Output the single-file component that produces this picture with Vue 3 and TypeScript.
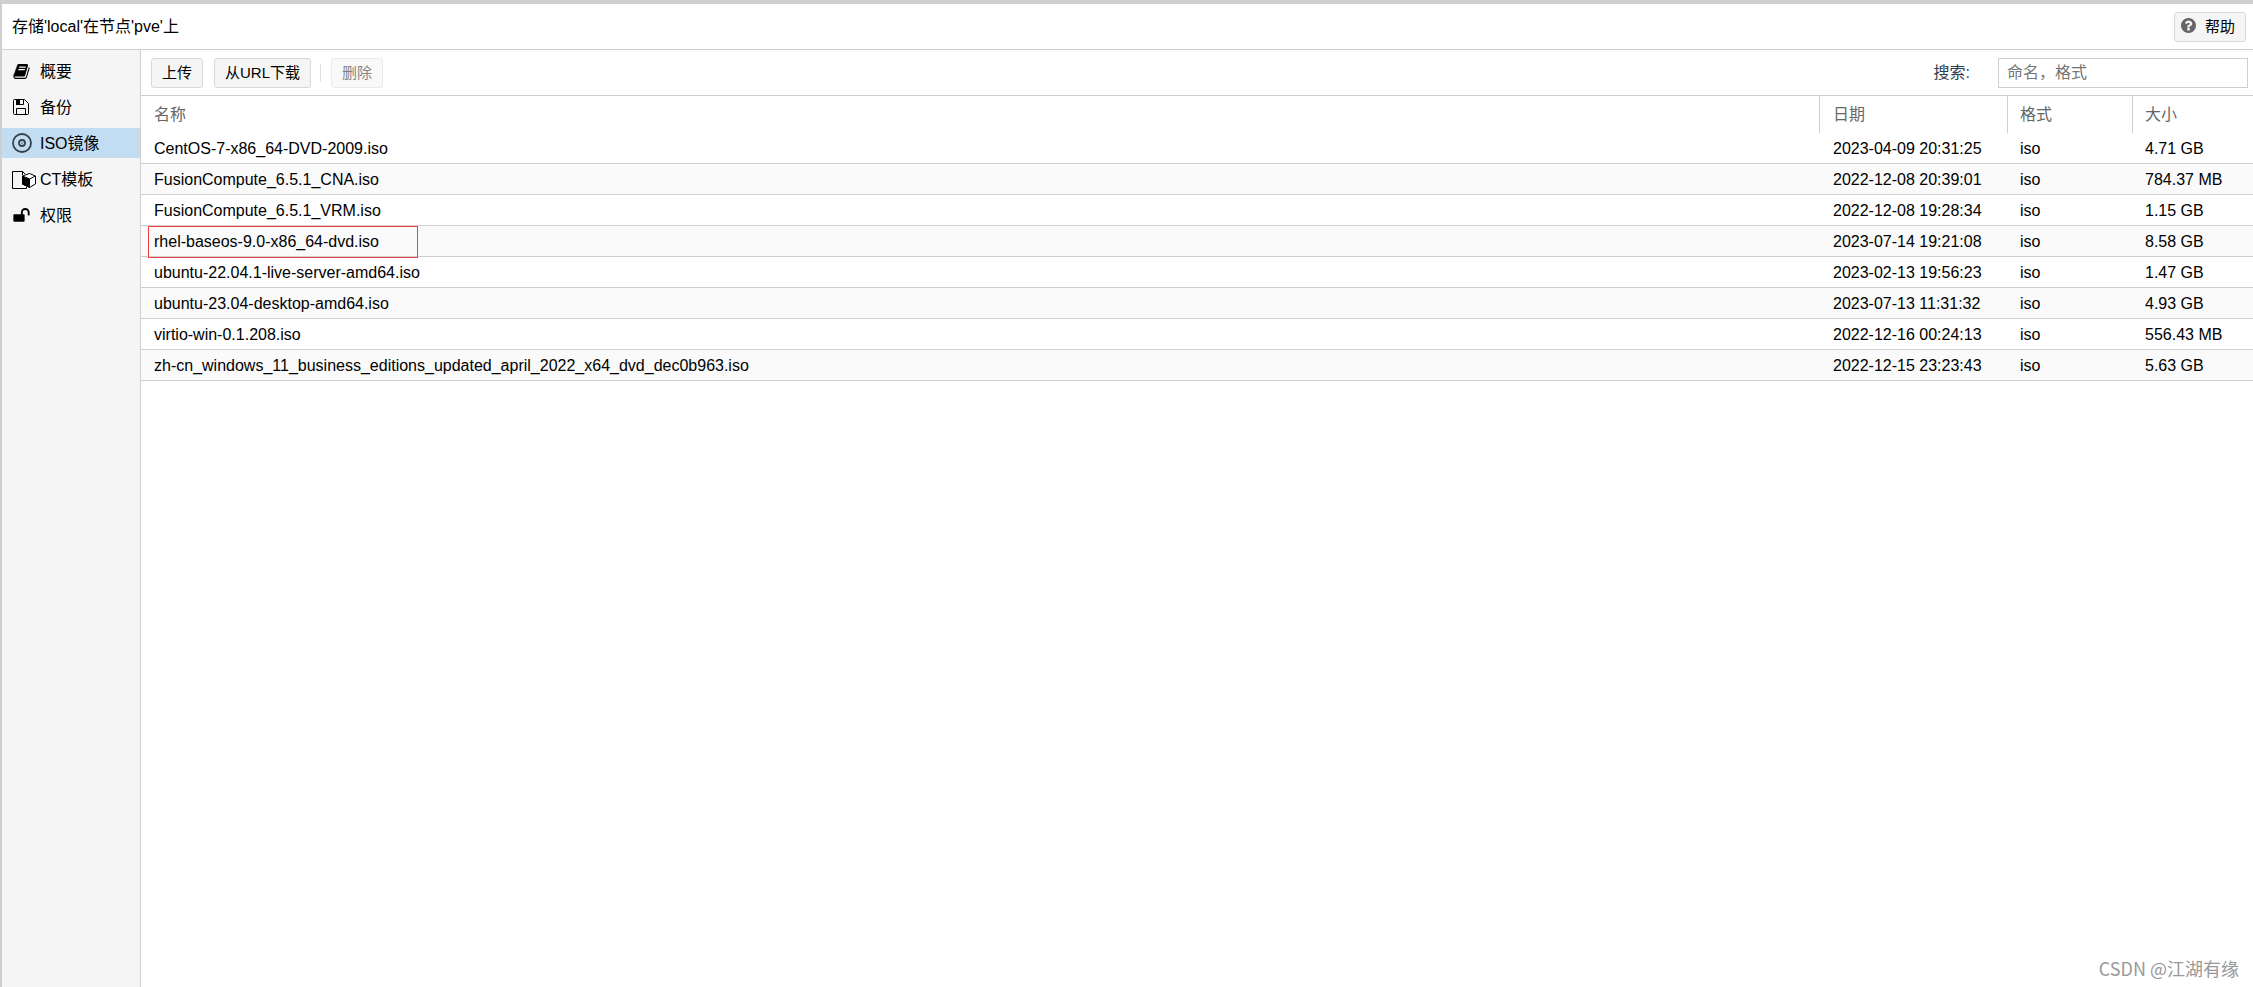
<script setup lang="ts">
import { ref, computed } from 'vue'

interface Volume {
  name: string
  date: string
  format: string
  size: string
  marked?: boolean
}

interface NavItem {
  id: string
  label: string
}

const navItems: NavItem[] = [
  { id: 'summary', label: '概要' },
  { id: 'backup', label: '备份' },
  { id: 'iso', label: 'ISO镜像' },
  { id: 'template', label: 'CT模板' },
  { id: 'permissions', label: '权限' },
]

const volumes: Volume[] = [
  { name: 'CentOS-7-x86_64-DVD-2009.iso', date: '2023-04-09 20:31:25', format: 'iso', size: '4.71 GB' },
  { name: 'FusionCompute_6.5.1_CNA.iso', date: '2022-12-08 20:39:01', format: 'iso', size: '784.37 MB' },
  { name: 'FusionCompute_6.5.1_VRM.iso', date: '2022-12-08 19:28:34', format: 'iso', size: '1.15 GB' },
  { name: 'rhel-baseos-9.0-x86_64-dvd.iso', date: '2023-07-14 19:21:08', format: 'iso', size: '8.58 GB', marked: true },
  { name: 'ubuntu-22.04.1-live-server-amd64.iso', date: '2023-02-13 19:56:23', format: 'iso', size: '1.47 GB' },
  { name: 'ubuntu-23.04-desktop-amd64.iso', date: '2023-07-13 11:31:32', format: 'iso', size: '4.93 GB' },
  { name: 'virtio-win-0.1.208.iso', date: '2022-12-16 00:24:13', format: 'iso', size: '556.43 MB' },
  { name: 'zh-cn_windows_11_business_editions_updated_april_2022_x64_dvd_dec0b963.iso', date: '2022-12-15 23:23:43', format: 'iso', size: '5.63 GB' },
]

const active = ref('iso')
const query = ref('')

const visible = computed(() => {
  const q = query.value.trim().toLowerCase()
  return q ? volumes.filter((v) => v.name.toLowerCase().includes(q) || v.format.includes(q)) : volumes
})
</script>

<template>
  <div class="panel">
    <header class="title-bar">
      <h1 class="title">存储'local'在节点'pve'上</h1>
      <button type="button" class="btn help">
        <svg class="help-icon" viewBox="128 128 1536 1536" aria-hidden="true">
          <path fill="currentColor" d="M1024 1376v-192q0-14-9-23t-23-9h-192q-14 0-23 9t-9 23v192q0 14 9 23t23 9h192q14 0 23-9t9-23zm256-672q0-88-55.500-163t-138.500-116-170-41q-243 0-371 213-15 24 8 42l132 100q7 6 19 6 16 0 25-12 53-68 86-92 34-24 86-24 48 0 85.500 26t37.500 59q0 38-20 61t-68 45q-63 28-115.500 86.500t-52.500 125.500v36q0 14 9 23t23 9h192q14 0 23-9t9-23q0-19 21.500-49.500t54.500-49.500q32-18 49-28.500t46-35 44.500-48 28-60.500 12.500-81zm384 192q0 209-103 385.500t-279.500 279.500-385.500 103-385.500-103-279.500-279.500-103-385.500 103-385.500 279.500-279.500 385.500-103 385.500 103 279.500 279.500 103 385.500z" />
        </svg>
        <span>帮助</span>
      </button>
    </header>

    <div class="body">
      <nav class="sidebar">
        <a
          v-for="item in navItems"
          :key="item.id"
          href="#"
          class="nav-item"
          :class="{ selected: item.id === active }"
          @click.prevent="active = item.id"
        >
          <span class="nav-icon">
            <svg v-if="item.id === 'summary'" class="glyph-wide" viewBox="0 128 1664 1536" aria-hidden="true">
              <path fill="currentColor" d="M1639 478q40 57 18 129l-275 906q-19 64-76.500 107.500t-122.500 43.500h-923q-77 0-148.500-53.500t-99.500-131.500q-24-67-2-127 0-4 3-27t4-37q1-8-3-21.500t-3-19.500q2-11 8-21t16.500-23.500 16.500-23.500q23-38 45-91.500t30-91.500q3-10 .5-30t-.5-28q3-11 17-28t17-23q21-36 42-92t25-90q1-9-2.500-32t.5-28q4-13 22-30.500t22-22.500q19-26 42.500-84.500t27.500-96.500q1-8-3-25.500t-2-26.500q2-8 9-18t18-23 17-21q8-12 16.500-30.500t15-35 16-36 19.500-32 26.500-23.500 36-11.500 47.500 5.500l-1 3q38-9 51-9h761q74 0 114 56t18 130l-274 906q-36 119-71.500 153.500t-128.500 34.500h-869q-27 0-38 15-11 16-1 43 24 70 144 70h923q29 0 56-15.500t35-41.500l300-987q7-22 5-57 38 15 59 43zm-1064 2q-4 13 2 22.500t20 9.500h608q13 0 25.500-9.500t16.500-22.500l21-64q4-13-2-22.500t-20-9.500h-608q-13 0-25.500 9.500t-16.500 22.500zm-83 256q-4 13 2 22.500t20 9.500h608q13 0 25.500-9.500t16.500-22.500l21-64q4-13-2-22.500t-20-9.500h-608q-13 0-25.500 9.500t-16.500 22.500z" />
            </svg>
            <svg v-else-if="item.id === 'backup'" class="glyph-floppy" viewBox="0 0 16 16" aria-hidden="true">
              <g fill="none" stroke="currentColor">
                <path d="M1.500 .5H11.500L15.500 4.500V14.500Q15.500 15.500 14.500 15.500H1.500Q.5 15.500 .5 14.500V1.500Q.5 .5 1.500 .5Z" />
                <path d="M3.500 .5V5.500H10.500V.5M3.500 15.500V9.500H12.500V15.500" />
              </g>
              <path fill="currentColor" d="M3 1H7V6H3Z" />
            </svg>
            <svg v-else-if="item.id === 'iso'" class="glyph-disc" viewBox="0 0 20 20" aria-hidden="true">
              <circle cx="10" cy="10" r="9" fill="none" stroke="#36424e" stroke-width="1.800" />
              <circle cx="10" cy="10" r="3" fill="none" stroke="#36424e" stroke-width="1.800" />
              <circle cx="10" cy="10" r="1" fill="#7d8c9a" />
            </svg>
            <svg v-else-if="item.id === 'template'" class="glyph-template" viewBox="0 0 25 18" aria-hidden="true">
              <path fill="#fff" d="M11 3H25V17H11Z" />
              <path fill="none" stroke="currentColor" d="M10.500 4V.5H.5V17.500H14.500V16M10.500 .5L13 3" />
              <path fill="#fff" stroke="currentColor" d="M17.500 2.500L23.500 5V13L17.500 16.500L10.500 13V5Z" />
              <path fill="currentColor" d="M10 5L18 8V17L10 13.500Z" />
              <path fill="none" stroke="currentColor" d="M10.500 5L17.500 8L23.500 5" />
            </svg>
            <svg v-else class="glyph-wide" viewBox="0 128 1664 1536" aria-hidden="true">
              <path fill="currentColor" d="M1664 576v256q0 26-19 45t-45 19h-64q-26 0-45-19t-19-45v-256q0-106-75-181t-181-75-181 75-75 181v192h96q40 0 68 28t28 68v576q0 40-28 68t-68 28h-960q-40 0-68-28t-28-68v-576q0-40 28-68t68-28h672v-192q0-185 131.500-316.500t316.500-131.500 316.500 131.500 131.500 316.500z" />
            </svg>
          </span>
          <span class="nav-label">{{ item.label }}</span>
        </a>
      </nav>

      <main class="content">
        <div class="toolbar">
          <button type="button" class="btn">上传</button>
          <button type="button" class="btn">从URL下载</button>
          <span class="divider"></span>
          <button type="button" class="btn" disabled>删除</button>
          <label class="search-label" for="search">搜索:</label>
          <input id="search" v-model="query" class="search" type="text" placeholder="命名，格式" />
        </div>

        <table class="grid">
          <colgroup>
            <col />
            <col class="col-date" />
            <col class="col-format" />
            <col class="col-size" />
          </colgroup>
          <thead>
            <tr>
              <th scope="col">名称</th>
              <th scope="col">日期</th>
              <th scope="col">格式</th>
              <th scope="col">大小</th>
            </tr>
          </thead>
          <tbody>
            <tr v-for="v in visible" :key="v.name">
              <td :class="{ marked: v.marked }">{{ v.name }}</td>
              <td>{{ v.date }}</td>
              <td>{{ v.format }}</td>
              <td>{{ v.size }}</td>
            </tr>
          </tbody>
        </table>
      </main>
    </div>

    <div class="watermark">CSDN @江湖有缘</div>
  </div>
</template>

<style>
body {
  margin: 0;
}
</style>

<style scoped>
.panel {
  box-sizing: border-box;
  min-height: 100vh;
  display: flex;
  flex-direction: column;
  border-top: 4px solid #cfcfcf;
  border-left: 2px solid #cfcfcf;
  background: #fff;
  color: #000;
  font-family: 'Liberation Sans', 'Noto Sans CJK SC', sans-serif;
  font-size: 16px;
  line-height: 20px;
}

.title-bar {
  display: flex;
  align-items: center;
  justify-content: space-between;
  height: 45px;
  padding: 0 7px 0 10px;
  border-bottom: 1px solid #cfcfcf;
}

.title {
  margin: 0;
  font-size: 16px;
  font-weight: 400;
}

.btn {
  box-sizing: border-box;
  height: 30px;
  padding: 0 10px;
  border: 1px solid #d8d8d8;
  border-radius: 3px;
  background: #f5f5f5;
  color: #000;
  font-family: inherit;
  font-size: 15px;
  line-height: 20px;
  white-space: nowrap;
}

.btn:disabled {
  opacity: 0.5;
}

.help {
  display: flex;
  align-items: center;
  gap: 9px;
  padding: 0 10px 0 6px;
}

.help-icon {
  width: 15px;
  height: 15px;
  margin-bottom: 2px;
  color: #666;
}

.body {
  flex: 1;
  display: flex;
}

.sidebar {
  flex: none;
  box-sizing: border-box;
  width: 139px;
  display: flex;
  flex-direction: column;
  gap: 6px;
  padding-top: 6px;
  border-right: 1px solid #cfcfcf;
  background: #f5f5f5;
}

.nav-item {
  display: flex;
  align-items: center;
  height: 30px;
  padding-left: 10px;
  color: #000;
  text-decoration: none;
  white-space: nowrap;
}

.nav-item.selected {
  background: #c2ddf2;
}

.nav-icon {
  flex: none;
  width: 28px;
  display: flex;
  align-items: center;
}

.nav-label {
  padding-top: 2px;
}

.glyph-wide {
  width: 17px;
  height: 15px;
  margin-left: 1px;
}

.glyph-floppy {
  width: 16px;
  height: 16px;
  margin-left: 1px;
}

.glyph-disc {
  width: 20px;
  height: 20px;
}

.glyph-template {
  width: 25px;
  height: 18px;
  margin-top: 2px;
}

.content {
  flex: 1;
  min-width: 0;
}

.toolbar {
  display: flex;
  align-items: center;
  height: 45px;
  padding: 0 5px 0 10px;
  border-bottom: 1px solid #cfcfcf;
}

.toolbar .btn + .btn {
  margin-left: 11px;
}

.divider {
  width: 1px;
  height: 18px;
  margin: 0 10px 0 9px;
  background: #e0e0e0;
}

.search-label {
  margin-left: auto;
  margin-right: 28px;
  color: #2c3e50;
}

.search {
  box-sizing: border-box;
  width: 250px;
  height: 30px;
  padding: 0 8px;
  border: 1px solid #cfcfcf;
  background: #fff;
  color: #000;
  font-family: inherit;
  font-size: 16px;
}

.search::placeholder {
  color: #757575;
  opacity: 1;
}

.grid {
  width: 100%;
  table-layout: fixed;
  border-collapse: separate;
  border-spacing: 0;
}

.col-date {
  width: 188px;
}

.col-format {
  width: 125px;
}

.col-size {
  width: 120px;
}

.grid th {
  box-sizing: border-box;
  height: 37px;
  padding: 0 12px;
  border-right: 1px solid #cfcfcf;
  color: #666;
  font-weight: 400;
  text-align: left;
}

.grid th:last-child {
  border-right: 0;
}

.grid td {
  box-sizing: border-box;
  height: 31px;
  padding: 1px 12px 0;
  border-bottom: 1px solid #cfcfcf;
  white-space: nowrap;
}

.grid th:nth-child(-n + 2),
.grid td:nth-child(-n + 2) {
  padding-left: 13px;
}

.grid tbody tr:nth-child(even) {
  background: #fafafa;
}

.marked {
  position: relative;
}

.marked::after {
  content: '';
  position: absolute;
  top: 0;
  left: 7px;
  box-sizing: border-box;
  width: 270px;
  height: 32px;
  border: 1px solid #f04040;
}

.watermark {
  position: absolute;
  right: 14px;
  bottom: 7px;
  color: #999;
  font-family: 'Noto Sans CJK SC', sans-serif;
  font-size: 18px;
  line-height: 24px;
}
</style>
